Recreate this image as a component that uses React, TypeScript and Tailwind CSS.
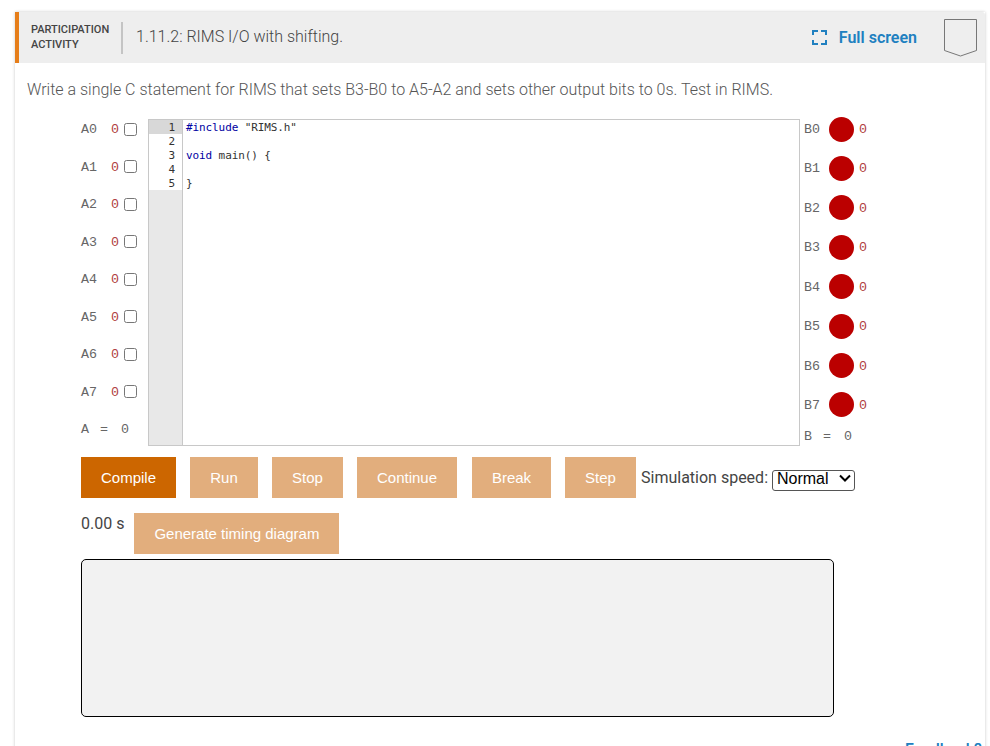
const buttons = [
  { label: 'Compile', w: 'w-[95px]', bg: 'bg-[#cc6600]', ml: '' },
  { label: 'Run', w: 'w-[68px]', bg: 'bg-[#e2ae7d]', ml: 'ml-[14px]' },
  { label: 'Stop', w: 'w-[71px]', bg: 'bg-[#e2ae7d]', ml: 'ml-[14px]' },
  { label: 'Continue', w: 'w-[100px]', bg: 'bg-[#e2ae7d]', ml: 'ml-[14px]' },
  { label: 'Break', w: 'w-[79px]', bg: 'bg-[#e2ae7d]', ml: 'ml-[15px]' },
  { label: 'Step', w: 'w-[71px]', bg: 'bg-[#e2ae7d]', ml: 'ml-[14px]' },
];

const inputs = [0, 1, 2, 3, 4, 5, 6, 7];

function FullScreenIcon() {
  return (
    <svg width="15" height="15" viewBox="0 0 15 15" fill="none" stroke="#2080c0" strokeWidth="2">
      <path d="M1 5V1H6M9 1H14V5M14 10V14H9M6 14H1V10" />
    </svg>
  );
}

function Bookmark() {
  return (
    <svg width="33" height="38" viewBox="0 0 33 38" fill="#eeeeee" stroke="#777" strokeWidth="1">
      <path d="M0.5 0.5H32.5V31.5L16.5 37L0.5 31.5Z" />
    </svg>
  );
}

function Editor() {
  return (
    <div className="flex h-[327px] w-[652px] border border-[#c8c8c8] bg-white font-['DejaVu_Sans_Mono',monospace] text-[11px] leading-[16px] tracking-[-0.1px] text-[#333]">
      <div className="w-[33px] shrink-0 bg-[#e8e8e8] text-right text-[#333]">
        {[1, 2, 3, 4, 5].map((n) => (
          <div key={n} className={`h-[14px] pr-[7px] ${n === 1 ? 'bg-[#d8d8d8]' : 'bg-white'}`}>
            {n}
          </div>
        ))}
      </div>
      <div className="border-l border-[#c8c8c8] pl-[3px]">
        <div className="h-[14px] whitespace-pre">
          <span className="text-[#0000a2]">#include</span> "RIMS.h"
        </div>
        <div className="h-[14px]" />
        <div className="h-[14px] whitespace-pre">
          <span className="text-[#0000a2]">void</span> main() {'{'}
        </div>
        <div className="h-[14px]" />
        <div className="h-[14px]">{'}'}</div>
      </div>
    </div>
  );
}

export default function App() {
  return (
    <div className="h-[746px] overflow-hidden bg-white pt-[12px] font-['Roboto',sans-serif]">
      <div className="ml-[15px] mr-[5px] shadow-[0_0_3px_rgba(0,0,0,0.22)]">
        {/* activity header */}
        <div className="flex h-[51px] items-center rounded-tr-[3px] border-l-[4px] border-[#e67e1a] bg-[#eeeeee] pl-[12px] pr-[8px]">
          <div className="mb-[1px] w-[90px] text-[11px] font-medium leading-[15px] text-[#444]">
            PARTICIPATION
            <br />
            ACTIVITY
          </div>
          <div className="h-[32px] w-[2px] bg-[#c4c4c4]" />
          <div className="mb-[2px] ml-[13px] text-[16px] font-light text-[#444]">1.11.2: RIMS I/O with shifting.</div>
          <div className="ml-auto flex items-center text-[16px] font-semibold text-[#2080c0]">
            <FullScreenIcon />
            <span className="ml-[12px]">Full screen</span>
          </div>
          <div className="ml-[27px] mt-[1px]">
            <Bookmark />
          </div>
        </div>

        <div className="h-[700px] pl-[12px]">
          <p className="mt-[17px] text-[16px] font-light leading-[20px] text-[#555]">
            Write a single C statement for RIMS that sets B3-B0 to A5-A2 and sets other output bits to 0s. Test in RIMS.
          </p>

          <div className="ml-[54px] mt-[19px] flex">
            {/* A inputs */}
            <div className="flex w-[67px] flex-col gap-[17.5px] font-['Liberation_Mono',monospace] text-[13.33px] text-[#666]">
              {inputs.map((i) => (
                <div key={i} className="flex h-[20px] items-center">
                  <span className="w-[30px] pt-[2px]">A{i}</span>
                  <span className="w-[13px] pt-[2px] text-[#b04040]">0</span>
                  <span className="h-[13px] w-[13px] rounded-[2.5px] border border-[#777] bg-white" />
                </div>
              ))}
              <div className="flex h-[20px] items-center pt-[2px]">
                <span className="w-[19px]">A</span>
                <span className="w-[21px]">=</span>
                <span>0</span>
              </div>
            </div>

            <Editor />

            {/* B outputs */}
            <div className="ml-[4px] -mt-[2.5px] font-['Liberation_Mono',monospace] text-[13.33px] text-[#666]">
              <div className="flex flex-col gap-[14.43px]">
                {inputs.map((i) => (
                  <div key={i} className="flex h-[25px] items-center">
                    <span className="w-[25px] pt-[2px]">B{i}</span>
                    <span className="h-[25px] w-[25px] rounded-full bg-[#bb0000]" />
                    <span className="ml-[5px] pt-[2px] text-[#b04040]">0</span>
                  </div>
                ))}
              </div>
              <div className="mt-[9px] flex h-[20px] items-center pt-[2px]">
                <span className="w-[19px]">B</span>
                <span className="w-[21px]">=</span>
                <span>0</span>
              </div>
            </div>
          </div>

          {/* simulator controls */}
          <div className="ml-[54px] mt-[11px] flex items-center">
            {buttons.map((b) => (
              <button
                key={b.label}
                className={`h-[41px] ${b.w} ${b.ml} ${b.bg} font-['Liberation_Sans',sans-serif] text-[15px] text-white`}
              >
                {b.label}
              </button>
            ))}
            <span className="ml-[5px] text-[16px] text-[#444]">Simulation speed:</span>
            <div className="relative ml-[4px] h-[21px] w-[83px]">
              <select className="h-[21px] w-[83px] appearance-none rounded-[3px] border border-[#555] bg-white pb-[5px] pl-[4px] font-['Liberation_Sans',sans-serif] text-[16px] leading-[15px] text-black">
                <option>Normal</option>
              </select>
              <svg className="pointer-events-none absolute right-[4px] top-[7px]" width="12" height="8" viewBox="0 0 12 8" fill="none" stroke="#000" strokeWidth="2">
                <path d="M1 1.5L6 6.5L11 1.5" />
              </svg>
            </div>
          </div>

          <div className="ml-[54px] mt-[15px] flex items-start">
            <span className="mt-[1px] text-[16px] leading-[19px] text-[#444]">0.00 s</span>
            <button className="ml-[10px] h-[41px] w-[205px] bg-[#e2ae7d] font-['Liberation_Sans',sans-serif] text-[15px] text-white">
              Generate timing diagram
            </button>
          </div>

          <div className="ml-[54px] mt-[5px] h-[158px] w-[753px] rounded-[5px] border border-black bg-[#f2f2f2]" />

          <div className="mt-[21px] pl-[878px] text-[16px] font-medium text-[#2080c0]">Feedback?</div>
        </div>
      </div>
    </div>
  );
}
